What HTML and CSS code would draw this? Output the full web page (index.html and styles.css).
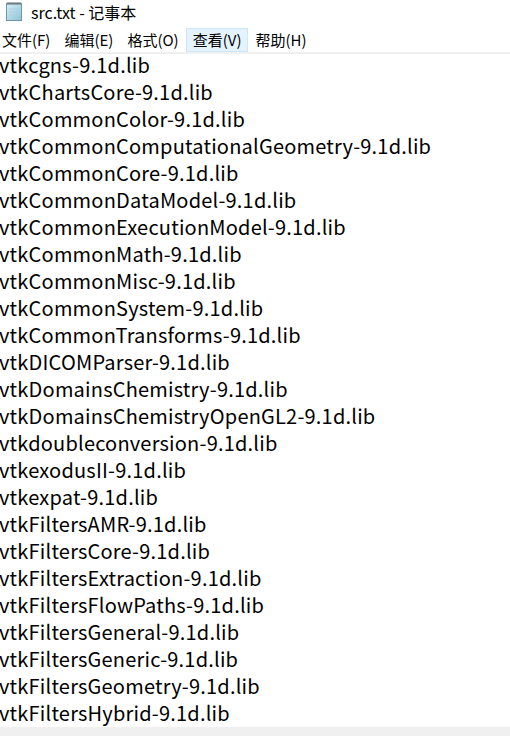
FILE: index.html
```html
<!DOCTYPE html>
<html lang="zh-CN">
<head>
    <meta charset="UTF-8">
    <title>src.txt - 记事本</title>
    <link rel="stylesheet" href="styles.css">
</head>
<body>
    <div class="window">
        <!-- Title bar -->
        <div class="titlebar">
            <svg class="app-icon" width="18" height="20" viewBox="0 0 18 20">
                <defs>
                    <linearGradient id="pad" x1="0" y1="0" x2="1" y2="1">
                        <stop offset="0" stop-color="#d9eef6"/>
                        <stop offset="1" stop-color="#8cc3d8"/>
                    </linearGradient>
                </defs>
                <rect x="1.5" y="2.5" width="15" height="17" fill="url(#pad)" stroke="#6f98aa"/>
                <path d="M3 1v3M5 1v3M7 1v3M9 1v3M11 1v3M13 1v3M15 1v3" stroke="#666" stroke-width="1"/>
                <path d="M4 8h10M4 11h10M4 14h10" stroke="#a8d0df" stroke-width="1"/>
            </svg>
            <span class="title">src.txt - 记事本</span>
        </div>

        <!-- Menu bar -->
        <div class="menubar">
            <span class="menu-item">文件(F)</span>
            <span class="menu-item">编辑(E)</span>
            <span class="menu-item">格式(O)</span>
            <span class="menu-item active">查看(V)</span>
            <span class="menu-item">帮助(H)</span>
        </div>

        <!-- Editor -->
        <div class="editor">
            <div class="line">vtkcgns-9.1d.lib</div>
            <div class="line">vtkChartsCore-9.1d.lib</div>
            <div class="line">vtkCommonColor-9.1d.lib</div>
            <div class="line">vtkCommonComputationalGeometry-9.1d.lib</div>
            <div class="line">vtkCommonCore-9.1d.lib</div>
            <div class="line">vtkCommonDataModel-9.1d.lib</div>
            <div class="line">vtkCommonExecutionModel-9.1d.lib</div>
            <div class="line">vtkCommonMath-9.1d.lib</div>
            <div class="line">vtkCommonMisc-9.1d.lib</div>
            <div class="line">vtkCommonSystem-9.1d.lib</div>
            <div class="line">vtkCommonTransforms-9.1d.lib</div>
            <div class="line">vtkDICOMParser-9.1d.lib</div>
            <div class="line">vtkDomainsChemistry-9.1d.lib</div>
            <div class="line">vtkDomainsChemistryOpenGL2-9.1d.lib</div>
            <div class="line">vtkdoubleconversion-9.1d.lib</div>
            <div class="line">vtkexodusII-9.1d.lib</div>
            <div class="line">vtkexpat-9.1d.lib</div>
            <div class="line">vtkFiltersAMR-9.1d.lib</div>
            <div class="line">vtkFiltersCore-9.1d.lib</div>
            <div class="line">vtkFiltersExtraction-9.1d.lib</div>
            <div class="line">vtkFiltersFlowPaths-9.1d.lib</div>
            <div class="line">vtkFiltersGeneral-9.1d.lib</div>
            <div class="line">vtkFiltersGeneric-9.1d.lib</div>
            <div class="line">vtkFiltersGeometry-9.1d.lib</div>
            <div class="line">vtkFiltersHybrid-9.1d.lib</div>
        </div>

        <!-- Horizontal scrollbar -->
        <div class="hscroll">
            <svg width="12" height="8" viewBox="0 0 12 8">
                <path d="M9 1L5 7" stroke="#a6a6a6" stroke-width="1.5"/>
            </svg>
        </div>
    </div>
</body>
</html>
```

FILE: styles.css
```css
/* Window frame */
body {
    margin: 0;
    background: #fff;
    font-family: "Noto Sans CJK SC", "Noto Sans", sans-serif;
    color: #000;
}

.window {
    width: 510px;
    height: 736px;
    display: flex;
    flex-direction: column;
    overflow: hidden;
}

/* Title bar */
.titlebar {
    height: 28px;
    display: flex;
    align-items: center;
    padding-left: 5px;
    gap: 8px;
}

.title {
    font-size: 16px;
    line-height: 20px;
    margin-top: -4px;
}

.app-icon {
    margin-top: -6px;
}

/* Menu bar */
.menubar {
    height: 24px;
    display: flex;
    align-items: stretch;
    border-bottom: 2px solid #f0f0f0;
}

.menu-item {
    font-size: 15px;
    line-height: 22px;
    padding: 0 6px 0 6px;
    border: 1px solid transparent;
}

.menu-item:first-child {
    padding-left: 1px;
}

.menu-item.active {
    background: #e5f3ff;
    border-color: #cce8ff;
}

/* Text area */
.editor {
    flex: 1;
    margin-top: -3px;
    font-size: 20px;
    line-height: 27px;
    letter-spacing: 0.2px;
    white-space: nowrap;
    overflow: hidden;
}

.line {
    margin-left: -1px;
}

.hscroll {
    height: 9px;
    background: #f0f0f0;
    padding-left: 6px;
}
```
